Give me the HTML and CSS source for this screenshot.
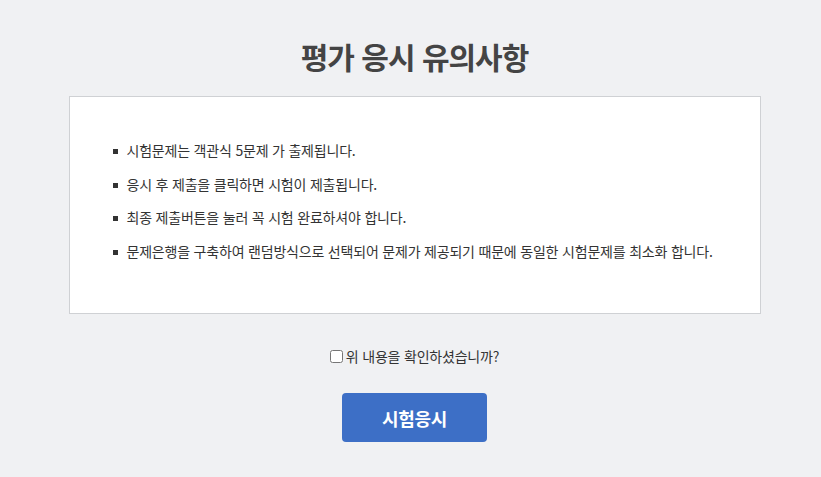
FILE: index.html
```html
<!DOCTYPE html>
<html lang="ko">
<head>
<meta charset="utf-8">
<link rel="stylesheet" href="styles.css">
</head>
<body>
<div class="page">
  <h1 class="title">평가 응시 유의사항</h1>
  <div class="notice">
    <ul class="rules">
      <li>시험문제는 객관식 5문제 가 출제됩니다.</li>
      <li>응시 후 제출을 클릭하면 시험이 제출됩니다.</li>
      <li>최종 제출버튼을 눌러 꼭 시험 완료하셔야 합니다.</li>
      <li>문제은행을 구축하여 랜덤방식으로 선택되어 문제가 제공되기 때문에 동일한 시험문제를 최소화 합니다.</li>
    </ul>
  </div>
  <label class="confirm"><input type="checkbox" class="check"><span>위 내용을 확인하셨습니까?</span></label>
  <button class="start" type="button">시험응시</button>
</div>
</body>
</html>
```
FILE: styles.css
```css
html, body {
  margin: 0;
  padding: 0;
  background: #f0f1f3;
}
body {
  font-family: "Noto Sans CJK KR", "Noto Sans", sans-serif;
  color: #333;
}
.page {
  box-sizing: border-box;
  width: 821px;
  height: 477px;
  padding-left: 8px;
  display: flex;
  flex-direction: column;
  align-items: center;
}
.title {
  margin: 34px 0 0;
  height: 48px;
  line-height: 44px;
  font-size: 30px;
  font-weight: 700;
  color: #444;
  letter-spacing: -1px;
}
.notice {
  box-sizing: border-box;
  width: 692px;
  height: 218px;
  margin-top: 14px;
  background: #fff;
  border: 1px solid #cfd1d4;
  padding: 37px 0 0 42px;
}
.rules {
  margin: 0;
  padding: 0;
  list-style: none;
}
.rules li {
  position: relative;
  padding-left: 15px;
  font-size: 14px;
  line-height: 33.6px;
  color: #333;
  letter-spacing: -0.2px;
}
.rules li::before {
  content: "";
  position: absolute;
  left: 1px;
  top: 15px;
  width: 5px;
  height: 5px;
  background: #333;
}
.confirm {
  margin-top: 31px;
  display: flex;
  align-items: center;
  gap: 3px;
  font-size: 14px;
  color: #333;
  letter-spacing: -0.2px;
  height: 22px;
}
.check {
  margin: 0;
  width: 13px;
  height: 13px;
}
.start {
  margin-top: 26px;
  width: 145px;
  height: 49px;
  border: none;
  border-radius: 4px;
  background: #3d6fc6;
  color: #fff;
  font-family: "Noto Sans CJK KR", "Noto Sans", sans-serif;
  font-size: 18px;
  font-weight: 700;
  letter-spacing: -0.3px;
}
```
